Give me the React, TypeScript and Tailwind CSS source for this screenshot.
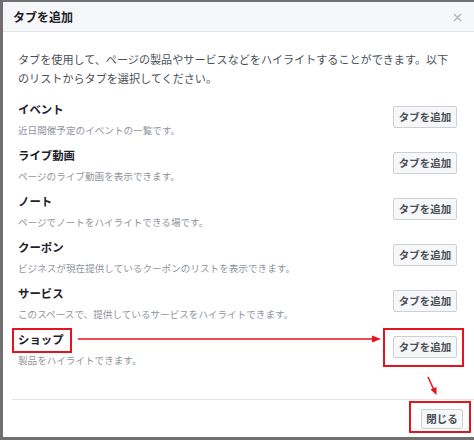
const tabs = [
  { title: 'イベント', desc: '近日開催予定のイベントの一覧です。' },
  { title: 'ライブ動画', desc: 'ページのライブ動画を表示できます。' },
  { title: 'ノート', desc: 'ページでノートをハイライトできる場です。' },
  { title: 'クーポン', desc: 'ビジネスが現在提供しているクーポンのリストを表示できます。' },
  { title: 'サービス', desc: 'このスペースで、提供しているサービスをハイライトできます。' },
  { title: 'ショップ', desc: '製品をハイライトできます。' },
];

const font = { fontFamily: '"Noto Sans CJK JP", "Liberation Sans", sans-serif' };

export default function App() {
  return (
    <div className="relative w-[474px] h-[440px] bg-[#707070] pl-[3px] pt-[2px] pb-[3px]" style={font}>
      <div className="flex flex-col h-full bg-white">
        <div className="flex items-center justify-between h-[30px] shrink-0 bg-[#f6f7f9] border-b border-[#e5e5e5] pl-[10px] pr-[12px]">
          <span className="text-[12px] font-semibold text-[#1d2129]">タブを追加</span>
          <svg width="9" height="9" viewBox="0 0 9 9" className="mt-[2px]">
            <path d="M1 1L8 8M8 1L1 8" stroke="#b5b9c0" strokeWidth="1.6" />
          </svg>
        </div>

        <div className="flex-1 pl-[15px] pr-[15px] pt-[18px]">
          <p className="text-[11.1px] leading-[19px] text-[#4b4f56]">
            タブを使用して、ページの製品やサービスなどをハイライトすることができます。以下のリストからタブを選択してください。
          </p>
          <div className="mt-[11px] flex flex-col gap-[4px]">
            {tabs.map((t) => (
              <div key={t.title} className="flex items-start justify-between mr-[2px]">
                <div>
                  <div className="text-[11.4px] leading-[20px] font-semibold text-[#1d2129]">{t.title}</div>
                  <div className="text-[9.6px] leading-[22px] text-[#90949c]">{t.desc}</div>
                </div>
                <button className="mt-[7px] w-[64px] h-[22px] rounded-[2px] border border-[#ced0d4] bg-[#f6f7f9] text-[10.5px] font-semibold text-[#4b4f56]">
                  タブを追加
                </button>
              </div>
            ))}
          </div>
        </div>

        <div className="flex justify-end shrink-0 h-[38px] ml-[9px] border-t border-[#e5e5e5] pt-[9px] pr-[11px]">
          <button className="w-[42px] h-[20px] rounded-[2px] border border-[#ced0d4] bg-[#f6f7f9] text-[10.5px] font-semibold text-[#4b4f56]">
            閉じる
          </button>
        </div>
      </div>

      <div className="absolute left-[12px] top-[328px] w-[60px] h-[25px] border-2 border-[#e3141e]" />
      <div className="absolute left-[383px] top-[328px] w-[81px] h-[39px] border-2 border-[#e3141e]" />
      <div className="absolute left-[409px] top-[401px] w-[62px] h-[32px] border-2 border-[#e3141e]" />
      <svg className="absolute inset-0 pointer-events-none" width="474" height="440">
        <line x1="78" y1="339" x2="374" y2="339" stroke="#e3141e" strokeWidth="1.5" />
        <path d="M381 339L372 335.5L372 342.5Z" fill="#e3141e" />
        <line x1="428" y1="377" x2="433.5" y2="389" stroke="#e3141e" strokeWidth="1.5" />
        <path d="M436.5 395L430.5 389.5L436.5 387Z" fill="#e3141e" />
      </svg>
    </div>
  );
}
